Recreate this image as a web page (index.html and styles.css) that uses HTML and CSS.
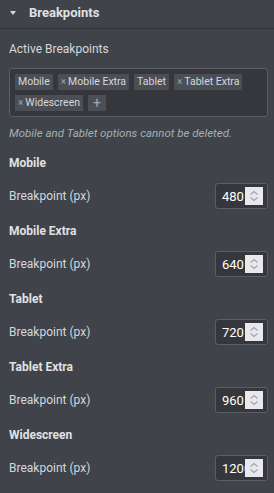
FILE: index.html
```html
<!DOCTYPE html>
<html>
<head>
<meta charset="utf-8">
<link rel="stylesheet" href="styles.css">
</head>
<body>
<div class="panel">
  <div class="head">
    <span class="caret"></span>
    <span class="head-title">Breakpoints</span>
  </div>
  <div class="body">
    <div class="label">Active Breakpoints</div>
    <div class="tagbox">
      <span class="tag">Mobile</span>
      <span class="tag"><span class="x">×</span>Mobile Extra</span>
      <span class="tag">Tablet</span>
      <span class="tag"><span class="x">×</span>Tablet Extra</span>
      <span class="tag"><span class="x">×</span>Widescreen</span>
      <span class="tag add">+</span>
    </div>
    <div class="note">Mobile and Tablet options cannot be deleted.</div>

    <div class="section">
      <div class="sec-title">Mobile</div>
      <div class="row"><span class="row-label">Breakpoint (px)</span><div class="num"><span class="val">480</span><span class="spin"><svg viewBox="0 0 18 18" width="18" height="18"><path d="M5.5 7.5 L9 4.5 L12.5 7.5 M5.5 10.5 L9 13.5 L12.5 10.5" fill="none" stroke="#a3a3ad" stroke-width="1.2"/></svg></span></div></div>
    </div>
    <div class="section">
      <div class="sec-title">Mobile Extra</div>
      <div class="row"><span class="row-label">Breakpoint (px)</span><div class="num"><span class="val">640</span><span class="spin"><svg viewBox="0 0 18 18" width="18" height="18"><path d="M5.5 7.5 L9 4.5 L12.5 7.5 M5.5 10.5 L9 13.5 L12.5 10.5" fill="none" stroke="#a3a3ad" stroke-width="1.2"/></svg></span></div></div>
    </div>
    <div class="section">
      <div class="sec-title">Tablet</div>
      <div class="row"><span class="row-label">Breakpoint (px)</span><div class="num"><span class="val">720</span><span class="spin"><svg viewBox="0 0 18 18" width="18" height="18"><path d="M5.5 7.5 L9 4.5 L12.5 7.5 M5.5 10.5 L9 13.5 L12.5 10.5" fill="none" stroke="#a3a3ad" stroke-width="1.2"/></svg></span></div></div>
    </div>
    <div class="section">
      <div class="sec-title">Tablet Extra</div>
      <div class="row"><span class="row-label">Breakpoint (px)</span><div class="num"><span class="val">960</span><span class="spin"><svg viewBox="0 0 18 18" width="18" height="18"><path d="M5.5 7.5 L9 4.5 L12.5 7.5 M5.5 10.5 L9 13.5 L12.5 10.5" fill="none" stroke="#a3a3ad" stroke-width="1.2"/></svg></span></div></div>
    </div>
    <div class="section">
      <div class="sec-title">Widescreen</div>
      <div class="row"><span class="row-label">Breakpoint (px)</span><div class="num"><span class="val">1200</span><span class="spin"><svg viewBox="0 0 18 18" width="18" height="18"><path d="M5.5 7.5 L9 4.5 L12.5 7.5 M5.5 10.5 L9 13.5 L12.5 10.5" fill="none" stroke="#a3a3ad" stroke-width="1.2"/></svg></span></div></div>
    </div>
  </div>
</div>
</body>
</html>
```
FILE: styles.css
```css
html, body {
  margin: 0;
  padding: 0;
  background: #404349;
}
body {
  font-family: Roboto, "Liberation Sans", sans-serif;
  color: #d5d8dc;
  width: 274px;
  height: 493px;
  overflow: hidden;
}
.panel {
  width: 274px;
}
.head {
  height: 29px;
  border-bottom: 1px solid #33363b;
  display: flex;
  align-items: center;
  padding-left: 10px;
  box-sizing: border-box;
  padding-bottom: 4px;
}
.caret {
  width: 0;
  height: 0;
  border-left: 3.5px solid transparent;
  border-right: 3.5px solid transparent;
  border-top: 4px solid #d5d8dc;
  margin-right: 13px;
  margin-top: 1px;
}
.head-title {
  font-weight: 700;
  font-size: 13px;
  color: #e0e1e3;
}
.body {
  padding: 10px 6px 0 9px;
}
.label {
  font-size: 12px;
  line-height: 16px;
  margin-top: 2px;
}
.tagbox {
  margin-top: 11px;
  background: #35373c;
  border: 1px solid #5b5e64;
  border-radius: 3px;
  padding: 5px;
  display: flex;
  flex-wrap: wrap;
  gap: 5px 5px;
  width: 259px;
  box-sizing: border-box;
}
.tag {
  background: #4b4e55;
  color: #d5d8dc;
  font-size: 10.5px;
  line-height: 16px;
  height: 16px;
  padding: 0 3px;
  display: inline-flex;
  align-items: center;
}
.tag .x {
  color: #9da3aa;
  font-size: 10px;
  margin-right: 2px;
}
.tag.add {
  color: #a4a9b0;
  font-size: 14px;
  padding: 0 5px;
}
.note {
  margin-top: 9px;
  font-size: 11.5px;
  font-style: italic;
  color: #a4afb7;
  line-height: 14px;
}
.section {
  height: 68px;
}
.sec-title {
  font-weight: 700;
  font-size: 12px;
  line-height: 16px;
  padding-top: 15px;
  color: #e0e1e3;
}
.row {
  display: flex;
  justify-content: space-between;
  align-items: center;
  margin-top: 12px;
  height: 26px;
}
.row-label {
  font-size: 12px;
}
.num {
  width: 53px;
  height: 26px;
  box-sizing: border-box;
  border: 1px solid #5b5e64;
  border-radius: 3px;
  background: #35373c;
  display: flex;
  align-items: center;
  padding: 0 4px 0 6px;
}
.val {
  flex: 1;
  min-width: 0;
  white-space: nowrap;
  font-size: 13px;
  color: #ffffff;
}
.spin {
  position: relative;
  z-index: 1;
  width: 18px;
  height: 18px;
  background: #e9e9ed;
  display: flex;
  flex: none;
}
.spin svg {
  display: block;
}
```
